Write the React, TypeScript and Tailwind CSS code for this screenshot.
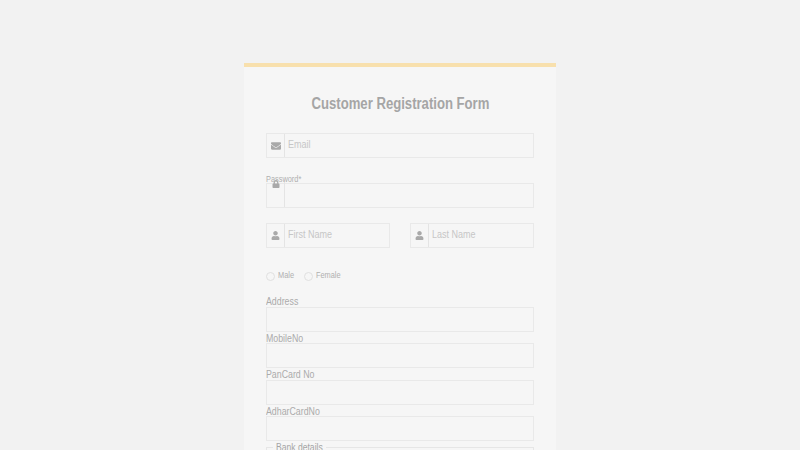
import React from 'react';
import { FaEnvelope, FaLock, FaUser } from 'react-icons/fa';

// no narrow font installed, so the text gets squeezed with scale-x
const IconInput: React.FC<{ icon: React.ReactNode; placeholder?: string; className?: string; iconClass?: string }> = ({
    icon,
    placeholder,
    className = '',
    iconClass = 'items-center',
}) => (
    <div className={`flex h-[25px] border border-[#e9e9e9] ${className}`}>
        <span className={`flex w-[18px] shrink-0 justify-center border-r border-[#e4e4e4] text-[#a9a9a9] ${iconClass}`}>
            {icon}
        </span>
        <div className="min-w-0 flex-1 overflow-hidden pl-[3px]">
            <input
                placeholder={placeholder}
                className="block h-full w-[120%] origin-left scale-x-[.82] bg-transparent pb-[3px] text-[11px] outline-none placeholder:text-[#c6c6c6]"
            />
        </div>
    </div>
);

const LabeledField: React.FC<{ label: string }> = ({ label }) => (
    <div>
        <label className="block h-[11.5px] origin-left scale-x-[.8] text-[11px] leading-[13.5px] whitespace-nowrap text-[#ababab]">
            {label}
        </label>
        <input className="block h-[25px] w-full border border-[#e9e9e9] bg-transparent outline-none" />
    </div>
);

const Radio: React.FC<{ label: string; textClass: string }> = ({ label, textClass }) => (
    <label className="flex items-center gap-[3px] text-[9px] text-[#b0b0b0]">
        <span className="h-[9px] w-[9px] rounded-full border border-[#e0e0e0]" />
        <span className={`origin-left scale-x-[.82] whitespace-nowrap ${textClass}`}>{label}</span>
    </label>
);

export default function App() {
    return (
        <div className="h-[450px] overflow-hidden bg-[#f2f2f2] pt-[63px] font-['Liberation_Sans',sans-serif]">
            <div className="mx-auto w-[312px] border-t-4 border-[#f8e0ad] bg-[#f6f6f6] px-[22px] pb-8">
                <h1 className="pt-[27px] text-center text-[16px] leading-[20px] font-bold text-[#a5a5a5]">
                    <span className="inline-block scale-x-[.82] whitespace-nowrap">Customer Registration Form</span>
                </h1>

                <IconInput className="mt-[19px]" icon={<FaEnvelope size={10} />} placeholder="Email" />

                <label className="mt-[15px] block h-[10px] origin-left scale-x-[.82] text-[9px] leading-[12px] whitespace-nowrap text-[#b0b0b0]">
                    Password*
                </label>
                <IconInput icon={<FaLock size={8} />} iconClass="items-start -mt-[4px]" />

                <div className="mt-[15px] flex justify-between">
                    <IconInput className="w-[124px]" icon={<FaUser size={9} />} placeholder="First Name" />
                    <IconInput className="w-[124px]" icon={<FaUser size={9} />} placeholder="Last Name" />
                </div>

                <div className="mt-[22px] flex h-[12px] gap-[10px]">
                    <Radio label="Male" textClass="w-[16px]" />
                    <Radio label="Female" textClass="w-[25px]" />
                </div>

                <div className="mt-[13px] flex flex-col">
                    <LabeledField label="Address" />
                    <LabeledField label="MobileNo" />
                    <LabeledField label="PanCard No" />
                    <LabeledField label="AdharCardNo" />
                </div>

                <fieldset className="mt-[1px] border border-[#e6e6e6] px-[6px]">
                    <legend className="w-[53px] px-[3px] text-[11px] leading-[11px] text-[#a5a5a5]">
                        <span className="inline-block origin-left scale-x-[.78] whitespace-nowrap">Bank details</span>
                    </legend>
                    <div className="h-[60px]" />
                </fieldset>
            </div>
        </div>
    );
}
